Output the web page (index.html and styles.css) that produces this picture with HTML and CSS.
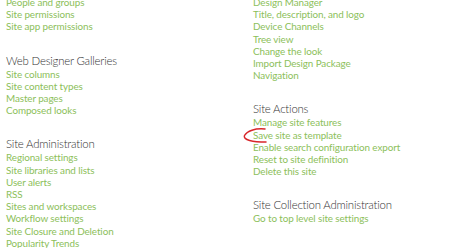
FILE: index.html
```html
<!DOCTYPE html>
<html lang="en">
<head>
    <meta charset="UTF-8">
    <title>Site Settings</title>
    <link rel="stylesheet" href="styles.css">
</head>
<body>
    <div class="settings">
        <div class="column">
            <div class="section">
                <ul class="links">
                    <li><a href="#">People and groups</a></li>
                    <li><a href="#">Site permissions</a></li>
                    <li><a href="#">Site app permissions</a></li>
                </ul>
            </div>
            <div class="section">
                <h3>Web Designer Galleries</h3>
                <ul class="links">
                    <li><a href="#">Site columns</a></li>
                    <li><a href="#">Site content types</a></li>
                    <li><a href="#">Master pages</a></li>
                    <li><a href="#">Composed looks</a></li>
                </ul>
            </div>
            <div class="section">
                <h3>Site Administration</h3>
                <ul class="links">
                    <li><a href="#">Regional settings</a></li>
                    <li><a href="#">Site libraries and lists</a></li>
                    <li><a href="#">User alerts</a></li>
                    <li><a href="#">RSS</a></li>
                    <li><a href="#">Sites and workspaces</a></li>
                    <li><a href="#">Workflow settings</a></li>
                    <li><a href="#">Site Closure and Deletion</a></li>
                    <li><a href="#">Popularity Trends</a></li>
                </ul>
            </div>
        </div>
        <div class="column">
            <div class="section">
                <ul class="links">
                    <li><a href="#">Design Manager</a></li>
                    <li><a href="#">Title, description, and logo</a></li>
                    <li><a href="#">Device Channels</a></li>
                    <li><a href="#">Tree view</a></li>
                    <li><a href="#">Change the look</a></li>
                    <li><a href="#">Import Design Package</a></li>
                    <li><a href="#">Navigation</a></li>
                </ul>
            </div>
            <div class="section">
                <h3>Site Actions</h3>
                <ul class="links">
                    <li><a href="#">Manage site features</a></li>
                    <li class="marked">
                        <svg class="circle-mark" width="28" height="20" viewBox="0 0 28 20">
                            <path d="M24 3 C14 2 6 5 3.5 9.5 C1.5 14 12 16 25 16" fill="none" stroke="#d8262a" stroke-width="1.5" stroke-linecap="round"/>
                        </svg>
                        <a href="#">Save site as template</a>
                    </li>
                    <li><a href="#">Enable search configuration export</a></li>
                    <li><a href="#">Reset to site definition</a></li>
                    <li><a href="#">Delete this site</a></li>
                </ul>
            </div>
            <div class="section">
                <h3>Site Collection Administration</h3>
                <ul class="links">
                    <li><a href="#">Go to top level site settings</a></li>
                </ul>
            </div>
        </div>
    </div>
</body>
</html>
```
FILE: styles.css
```css
body {
    margin: 0;
    background-color: #fff;
    font-family: Lato, "Open Sans", sans-serif;
    overflow: hidden;
}

.settings {
    display: grid;
    grid-template-columns: 247px 1fr;
    padding-left: 6px;
    margin-top: -4px;
}

.section {
    margin-bottom: 21px;
}

h3 {
    margin: 0;
    font-size: 11.4px;
    font-weight: 300;
    letter-spacing: -0.2px;
    line-height: 14px;
    color: #333;
}

.links {
    list-style: none;
    margin: 0;
    padding: 0;
}

.links li {
    font-size: 9.9px;
    letter-spacing: -0.1px;
    line-height: 12.2px;
    white-space: nowrap;
}

.links a {
    color: #8cc05a;
    text-decoration: none;
}

.marked {
    position: relative;
}

.circle-mark {
    position: absolute;
    left: -12px;
    top: -3px;
}
```
